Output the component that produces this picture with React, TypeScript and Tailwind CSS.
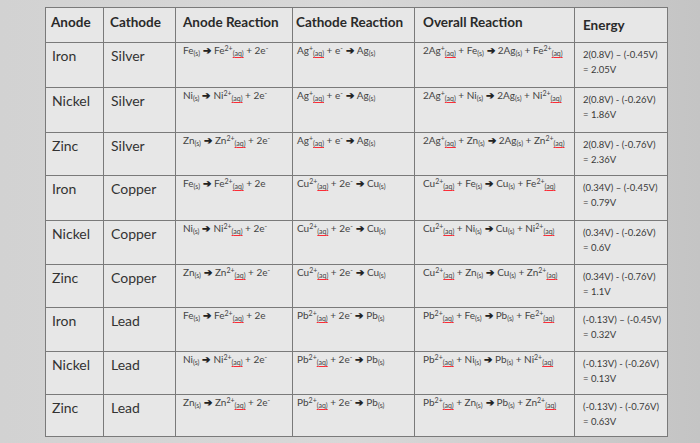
import React from "react";

type Sp = { b: string; sup?: string; st?: string };

const Species = ({ b, sup, st }: Sp) => (
    <span>
        {b}
        {sup && <sup className="text-[7px]">{sup}</sup>}
        {st && (
            <sub className={`text-[7px] ${st === "aq" ? "underline decoration-red-500" : ""}`}>
                ({st})
            </sub>
        )}
    </span>
);

const Arrow = () => <span className="mx-[3px] font-bold text-[#222]">➔</span>;

// one side of an equation: list of species joined with " + "
const Side = ({ items }: { items: (Sp | string)[] }) => (
    <>
        {items.map((it, i) => (
            <React.Fragment key={i}>
                {i > 0 && " + "}
                {typeof it === "string" ? it : <Species {...it} />}
            </React.Fragment>
        ))}
    </>
);

const Eq = ({ l, r }: { l: (Sp | string)[]; r: (Sp | string)[] }) => (
    <span className="whitespace-nowrap">
        <Side items={l} />
        <Arrow />
        <Side items={r} />
    </span>
);

const metals: Record<string, { s: Sp; ion: Sp; e: string }> = {
    Iron: { s: { b: "Fe", st: "s" }, ion: { b: "Fe", sup: "2+", st: "aq" }, e: "-0.45V" },
    Nickel: { s: { b: "Ni", st: "s" }, ion: { b: "Ni", sup: "2+", st: "aq" }, e: "-0.26V" },
    Zinc: { s: { b: "Zn", st: "s" }, ion: { b: "Zn", sup: "2+", st: "aq" }, e: "-0.76V" },
};

const cathodes: Record<string, { s: Sp; ion: Sp; el: Sp; coef: string; e: string }> = {
    Silver: { s: { b: "Ag", st: "s" }, ion: { b: "Ag", sup: "+", st: "aq" }, el: { b: "e", sup: "-" }, coef: "2", e: "0.8V" },
    Copper: { s: { b: "Cu", st: "s" }, ion: { b: "Cu", sup: "2+", st: "aq" }, el: { b: "2e", sup: "-" }, coef: "", e: "0.34V" },
    Lead: { s: { b: "Pb", st: "s" }, ion: { b: "Pb", sup: "2+", st: "aq" }, el: { b: "2e", sup: "-" }, coef: "", e: "-0.13V" },
};

const rows = [
    { a: "Iron", c: "Silver", dash: "–", res: "2.05V", h: "h-[45px]" },
    { a: "Nickel", c: "Silver", dash: "-", res: "1.86V", h: "h-[45px]" },
    { a: "Zinc", c: "Silver", dash: "-", res: "2.36V", h: "h-[43px]" },
    { a: "Iron", c: "Copper", dash: "–", res: "0.79V", h: "h-[45px]" },
    { a: "Nickel", c: "Copper", dash: "-", res: "0.6V", h: "h-[44px]" },
    { a: "Zinc", c: "Copper", dash: "-", res: "1.1V", h: "h-[43px]" },
    { a: "Iron", c: "Lead", dash: "–", res: "0.32V", h: "h-[44px]" },
    { a: "Nickel", c: "Lead", dash: "-", res: "0.13V", h: "h-[43px]" },
    { a: "Zinc", c: "Lead", dash: "-", res: "0.63V", h: "h-[42px]" },
];

const cell = "border border-[#7a7a7a] align-top";

export default function App() {
    return (
        <div
            className="w-[700px] h-[443px] overflow-hidden bg-gradient-to-r from-[#d2d2d2] via-[#d8d8d8] to-[#c4c4c4] pl-[45px] pt-[7px]"
            style={{ fontFamily: "Lato, 'Open Sans', sans-serif" }}
        >
            <table className="border-collapse bg-[#e7e7e7] text-[#333] table-fixed w-[622px]">
                <colgroup>
                    <col className="w-[58px]" />
                    <col className="w-[72px]" />
                    <col className="w-[117px]" />
                    <col className="w-[122px]" />
                    <col className="w-[160px]" />
                    <col className="w-[93px]" />
                </colgroup>
                <thead>
                    <tr className="h-[35px] text-[13.5px] font-bold text-[#2a2a2a]">
                        <th className={`${cell} text-left px-[5px] pt-[4px]`}>Anode</th>
                        <th className={`${cell} text-left px-[6px] pt-[4px]`}>Cathode</th>
                        <th className={`${cell} text-left px-[7px] pt-[4px]`}>Anode Reaction</th>
                        <th className={`${cell} text-left px-[3px] pt-[4px] whitespace-nowrap`}>Cathode Reaction</th>
                        <th className={`${cell} text-left px-[8px] pt-[4px]`}>Overall Reaction</th>
                        <th className={`${cell} text-left px-[8px] pt-[7px]`}>Energy</th>
                    </tr>
                </thead>
                <tbody>
                    {rows.map((r, i) => {
                        const m = metals[r.a];
                        const k = cathodes[r.c];
                        const anodeEl: Sp = { b: "2e", sup: r.a === "Iron" && r.c !== "Silver" ? undefined : "-" };
                        const first = k.coef ? `2(${k.e})` : `(${k.e})`;
                        return (
                            <tr key={i} className={r.h}>
                                <td className={`${cell} px-[6px] pt-[4px] text-[14px] leading-[18px]`}>{r.a}</td>
                                <td className={`${cell} px-[7px] pt-[4px] text-[14px] leading-[18px]`}>{r.c}</td>
                                <td className={`${cell} px-[7px] pt-[1px] text-[10px] leading-[13px] text-[#444]`}>
                                    <Eq l={[m.s]} r={[m.ion, anodeEl]} />
                                </td>
                                <td className={`${cell} px-[4px] pt-[1px] text-[10px] leading-[13px] text-[#444]`}>
                                    <Eq l={[k.ion, k.el]} r={[k.s]} />
                                </td>
                                <td className={`${cell} px-[8px] pt-[1px] text-[10px] leading-[13px] text-[#444]`}>
                                    <Eq
                                        l={[{ ...k.ion, b: k.coef + k.ion.b }, m.s]}
                                        r={[{ ...k.s, b: k.coef + k.s.b }, m.ion]}
                                    />
                                </td>
                                <td className={`${cell} px-[8px] pt-[4px] text-[9.5px] leading-[15px] text-[#3a3a3a]`}>
                                    <div className="whitespace-nowrap">
                                        {first} {r.dash} ({m.e})
                                    </div>
                                    <div>= {r.res}</div>
                                </td>
                            </tr>
                        );
                    })}
                </tbody>
            </table>
        </div>
    );
}
